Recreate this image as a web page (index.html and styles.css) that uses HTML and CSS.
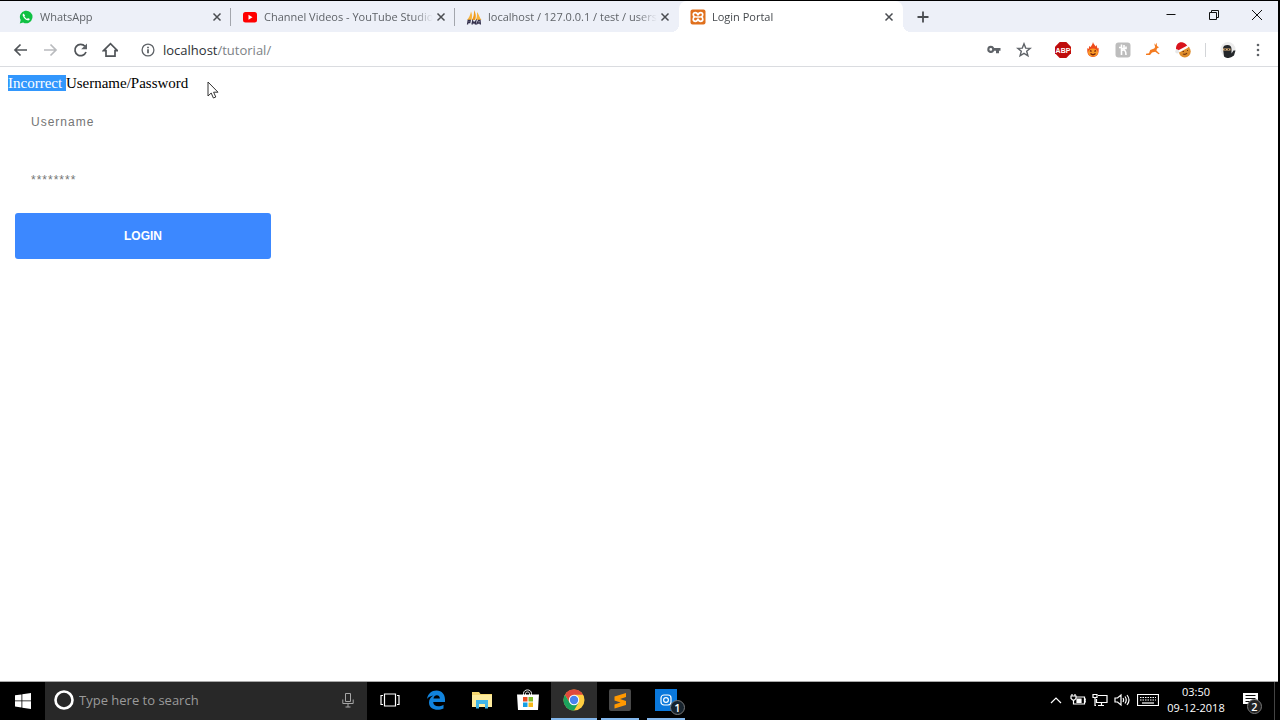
FILE: index.html
```html
<!DOCTYPE html>
<html lang="en">
<head>
<meta charset="utf-8">
<title>Login Portal</title>
<link rel="stylesheet" href="styles.css">
</head>
<body>
<div class="browser">
  <header class="strip">
    <div class="tabs">
      <div class="tab">
        <svg class="fav" viewBox="0 0 16 16"><path d="M1.800 14.400l.9-3.300a6.300 6.300 0 1 1 2.400 2.400z" fill="#10c143"/><path d="M5.600 4.400c-.9.4-1.200 1.400-.7 2.500.9 2 2.500 3.700 4.500 4.400 1.200.4 2.200-.2 2.400-1.300L9.900 9l-.8.9C7.900 9.400 6.900 8.400 6.400 7.200l.7-.8z" fill="#fff"/></svg>
        <span class="label">WhatsApp</span>
        <button class="close" aria-label="Close tab"><svg width="10" height="10" viewBox="0 0 10 10"><path d="M1.500 1.500l7 7m0-7l-7 7"/></svg></button>
      </div>
      <div class="tab">
        <svg class="fav" viewBox="0 0 16 16"><rect x="1" y="3" width="14" height="10.500" rx="2.500" fill="#f00"/><path d="M6.500 5.800v5l4-2.500z" fill="#fff"/></svg>
        <span class="label">Channel Videos - YouTube Studio</span>
        <button class="close" aria-label="Close tab"><svg width="10" height="10" viewBox="0 0 10 10"><path d="M1.500 1.500l7 7m0-7l-7 7"/></svg></button>
      </div>
      <div class="tab last">
        <svg class="fav" viewBox="0 0 16 16"><path d="M1 11C3 9 4.300 6 5 2.500c1.200 2.500 1.300 5.500.5 8.500z" fill="#f7b23b"/><path d="M6 11c1.500-3 2.300-6 2-10 2 3 2.300 7 1.200 10z" fill="#f29a1a"/><path d="M9.800 11c1-2 1.400-4 1.200-8 2 2.500 2.700 6 4.500 8z" fill="#f7b23b"/><path d="M1.500 15.500l.7-4h2l-.4 2h-1.700M6 15.500l.7-3.500 1.200 2.200 2-2.200-.7 3.500M10.500 15.500l2-4h1.500l.4 4m-3-1.500h3" fill="none" stroke="#34304c" stroke-width="1.300"/></svg>
        <span class="label">localhost / 127.0.0.1 / test / users</span>
        <button class="close" aria-label="Close tab"><svg width="10" height="10" viewBox="0 0 10 10"><path d="M1.500 1.500l7 7m0-7l-7 7"/></svg></button>
      </div>
      <div class="tab active">
        <svg class="fav" viewBox="0 0 16 16"><rect x=".5" y=".5" width="15" height="15" rx="2" fill="#e0701d"/><g fill="none" stroke="#fff" stroke-width="1.700"><path d="M8 6.300C7.500 4.500 6.700 3.700 5.300 3.700c-2.600 0-2.600 3.300-.6 4.100-2.200 1-2 4.500.6 4.500 1.400 0 2.200-.8 2.700-2.600M8 6.300c.5-1.800 1.300-2.600 2.700-2.600 2.600 0 2.600 3.300.6 4.100 2.200 1 2 4.500-.6 4.500-1.400 0-2.200-.8-2.700-2.600M5.500 8h5"/></g></svg>
        <span class="label">Login Portal</span>
        <button class="close" aria-label="Close tab"><svg width="10" height="10" viewBox="0 0 10 10"><path d="M1.500 1.500l7 7m0-7l-7 7"/></svg></button>
      </div>
      <button class="newtab" aria-label="New tab"><svg width="12" height="12" viewBox="0 0 12 12"><path d="M6 .5v11M.5 6h11" stroke="#4a4d51" stroke-width="1.800"/></svg></button>
    </div>
    <div class="winbtns">
      <button aria-label="Minimize"><svg width="12" height="12" viewBox="0 0 12 12"><path d="M1.500 5.500h9"/></svg></button>
      <button aria-label="Restore"><svg width="12" height="12" viewBox="0 0 12 12"><path d="M1.500 3.500h7v7h-7zM3.500 3.500v-2h7v7h-2"/></svg></button>
      <button aria-label="Close"><svg width="12" height="12" viewBox="0 0 12 12"><path d="M1 1l10 10M11 1L1 11"/></svg></button>
    </div>
  </header>
  <nav class="toolbar">
    <button class="tool" aria-label="Back"><svg viewBox="0 0 16 16"><path d="M15 8H3.500M8.500 2.500L3 8l5.500 5.500" class="ln"/></svg></button>
    <button class="tool dim" aria-label="Forward"><svg viewBox="0 0 16 16"><path d="M2 8h11.500M8.500 2.500L14 8l-5.500 5.500" class="ln"/></svg></button>
    <button class="tool" aria-label="Reload"><svg viewBox="0 0 16 16"><path d="M14 10a5.700 5.700 0 1 1-1-5.700" class="ln"/><path d="M15 1.500v5.800H9.200z"/></svg></button>
    <button class="tool" aria-label="Home"><svg viewBox="0 0 16 16"><path d="M1.500 8.600L8.500 1.700l7 6.900H13v5.600H4V8.600z" class="ln"/></svg></button>
    <div class="address">
      <svg width="14" height="14" viewBox="0 0 14 14"><circle cx="7" cy="7" r="5.900" fill="none" stroke="#5f6368" stroke-width="1.300"/><path d="M6.200 6.200h1.600v4H6.200zM6.200 3.700h1.600v1.500H6.200z" fill="#4d5256"/></svg>
      <span class="url">localhost<span class="path">/tutorial/</span></span>
    </div>
    <button class="tool" aria-label="Saved passwords"><svg viewBox="0 0 16 16"><path fill-rule="evenodd" d="M4.800 3.800a3.600 3.600 0 1 0 3.400 5H10v2.500h3V8.800h1.500V5.900H8.200a3.600 3.600 0 0 0-3.400-2.100zm0 2.200a1.400 1.400 0 1 1 0 2.800 1.400 1.400 0 0 1 0-2.800z"/></svg></button>
    <button class="tool" aria-label="Bookmark"><svg viewBox="0 0 16 16"><path d="M8 1.800l1.700 4.300 4.500.3-3.500 2.900 1.200 4.500L8 11.300l-3.900 2.500 1.200-4.500L1.800 6.400l4.500-.3z" fill="none" stroke="#5f6368" stroke-width="1.400"/></svg></button>
    <div class="extensions">
      <button class="tool" aria-label="Adblock Plus"><svg viewBox="0 0 16 16"><path d="M4.700 0h6.600L16 4.700v6.600L11.300 16H4.700L0 11.300V4.700z" fill="#bf0d0d"/><text x="8" y="10.500" text-anchor="middle" class="abp">ABP</text></svg></button>
      <button class="tool" aria-label="Hot extension"><svg viewBox="0 0 16 16"><path d="M8 0c.3 2 1.700 2.800 2.500 4.500l1-1.500c.5 1.500.5 2.200 1 3.500l1-.7c.8 5.800-1 9.200-5.500 9.200S1.700 11.500 2.400 6l1.300 1 .5-3 1.500 1C6.700 3.500 7.500 2 8 0z" fill="#ee4b1b"/><ellipse cx="8" cy="10.500" rx="5" ry="4" fill="#fa9a27"/><path d="M5 8.600l1.600.8M11 8.600l-1.600.8M5.500 11.500q2.500 2.500 5 0" stroke="#78230d" stroke-width="1.300" fill="none"/></svg></button>
      <button class="tool" aria-label="Honey"><svg viewBox="0 0 16 16"><rect x=".5" y=".5" width="15" height="15" rx="3" fill="#bdbdbd"/><path d="M6.500 2.500V8M4 5.500h3M6.500 8v5M6.500 8.500c3-1.500 4.500 0 4.500 4.500M9 3v5M11 4.500v2H7" stroke="#fff" stroke-width="1.600" fill="none"/></svg></button>
      <button class="tool" aria-label="Deer extension"><svg viewBox="0 0 16 16"><path d="M9 1l1.300 2L11.500.8l.5 3.200 2 1.200-2 1.300-.6 2 3.300 3.300-1 .5-3.500-2.500L7 10.500 5 13H1v-1.300l3-.5 1.200-3.200 4-1.500 1-1.500z" fill="#f47b20"/></svg></button>
      <button class="tool" aria-label="Cookie extension"><svg viewBox="0 0 16 16"><circle cx="9.800" cy="9.500" r="5.900" fill="#de8d2b"/><path d="M1 7C1 2 4-.5 8 .5c2.500.6 4 2.500 4.500 4.500L4.500 9z" fill="#d9131c"/><path d="M4.500 9L12 5" stroke="#fff" stroke-width="2.200" stroke-linecap="round"/><circle cx="2.200" cy="9.500" r="2" fill="#e8e8e8"/><path d="M7.500 9.500H9m3-1h1M8 12q2.500 1 4-.8" stroke="#773811" stroke-width="1.200" fill="none"/></svg></button>
    </div>
    <span class="divider"></span>
    <button class="tool" aria-label="Profile"><svg viewBox="0 0 16 16"><circle cx="8" cy="7.500" r="7.500" fill="#ececec"/><path d="M3 6.500C3 4 5 3 7.500 3 10 3 11.500 4.500 11.500 7v4.500l2-3h2l-1.500 5q-6 4.500-10 1z" fill="#24272a"/><path d="M3 6.500h7.500v2H3z" fill="#e6b679"/><path d="M4.500 7.500h1.300m2 0h1.300" stroke="#222"/></svg></button>
    <button class="tool" aria-label="Menu"><svg viewBox="0 0 16 16"><circle cx="8" cy="3" r="1.300"/><circle cx="8" cy="8" r="1.300"/><circle cx="8" cy="13" r="1.300"/></svg></button>
  </nav>
  <main class="page">
    <p class="error"><mark>Incorrect </mark>Username/Password</p>
    <form class="login">
      <input type="text" aria-label="Username" placeholder="Username">
      <input type="password" aria-label="Password" placeholder="********">
      <button type="button">LOGIN</button>
    </form>
    <svg class="cursor" width="12" height="18" viewBox="0 0 12 18"><path d="M1 1v14l3.200-3 2.200 5 2.400-1-2.200-4.800H11z" fill="#fff" stroke="#333"/></svg>
  </main>
</div>
<footer class="taskbar">
  <button class="start" aria-label="Start"><svg width="16" height="16" viewBox="0 0 16 16" fill="#fff"><path d="M0 2.300l6.500-.9v6.100H0zM7.300 1.300L16 0v7.500H7.300zM0 8.300h6.500v6.200L0 13.600zM7.300 8.300H16V16l-8.700-1.300z"/></svg></button>
  <div class="search">
    <svg width="22" height="22" viewBox="0 0 22 22"><circle cx="11" cy="11" r="8.500" fill="none" stroke="#fff" stroke-width="2.600"/></svg>
    <input type="text" aria-label="Search" placeholder="Type here to search">
    <svg width="12" height="16" viewBox="0 0 12 16" fill="none" stroke="#a5a5a5"><path d="M3.500 1.500h5v8h-5zM.8 7.500v4h10.400v-4M6 11.500V15M3.500 15h5"/></svg>
  </div>
  <div class="apps">
    <button class="app" aria-label="Task View"><svg width="20" height="14" viewBox="0 0 20 14" fill="none" stroke="#fff" stroke-width="1.200"><path d="M4.500 1h11v12h-11zM3 2.500H1v9h2M17 2.500h2v9h-2"/></svg></button>
    <button class="app" aria-label="Edge"><svg width="20" height="20" viewBox="0 0 20 20"><path d="M1 9C2 3.500 5.500.5 10.500.5c5.500 0 8.500 4 8.500 9V12H7.200c.2 5 6.300 5.300 10.300 2.700v3.700C11.500 21.500 3 19.500 3 12.500c0-3 1.700-5.600 4.500-7C4.500 5.800 2.200 7.200 1 9zm6.400-.5h6.500c0-4.500-5.900-4.500-6.500 0z" fill="#1183dc" fill-rule="evenodd"/></svg></button>
    <button class="app" aria-label="File Explorer"><svg width="20" height="18" viewBox="0 0 20 18"><path d="M0 1h7l1.500 2H20v13H0z" fill="#f5d66e"/><path d="M0 4h20v12H0z" fill="#fdeb9d"/><path d="M4 9h12v8.500h-3V13H7v4.500H4z" fill="#3fb5e8"/></svg></button>
    <button class="app" aria-label="Store"><svg width="22" height="22" viewBox="0 0 22 22"><path d="M6.500 7V4.500C6.500-.3 14.500-.3 14.500 4.500V7M8.500 6V4.500c0-2 4-2 4 0V6" fill="none" stroke="#eee"/><path d="M0 5.500h22L21 21H1z" fill="#fff"/><path d="M6 8h4.500v4.500H6z" fill="#e84b22"/><path d="M11.500 8H16v4.500h-4.500z" fill="#7fb92a"/><path d="M6 13.500h4.500V18H6z" fill="#159ee4"/><path d="M11.500 13.500H16V18h-4.500z" fill="#f6b81a"/></svg></button>
    <button class="app current" aria-label="Chrome"><svg width="22" height="22" viewBox="0 0 22 22"><circle cx="11" cy="11" r="10.500" fill="#ffcd40"/><path d="M1.900 5.750A10.500 10.500 0 0 1 20.100 5.750H11L6.500 13.600z" fill="#e04a3d"/><path d="M1.900 5.750A10.500 10.500 0 0 0 11 21.500l4.600-7.900H6.500z" fill="#1ba25d"/><circle cx="11" cy="11" r="5.200" fill="#fff"/><circle cx="11" cy="11" r="4.200" fill="#4a83ee"/></svg></button>
    <button class="app open" aria-label="Sublime Text"><svg width="22" height="22" viewBox="0 0 22 22"><rect width="22" height="22" rx="2" fill="#494949"/><path d="M5.500 7.500L17 4v4l-6 2 6 2v4L5.500 19.500v-4l6-2-6-2z" fill="#ff9800"/></svg></button>
    <button class="app open" aria-label="Instagram"><svg width="22" height="22" viewBox="0 0 22 22"><path d="M0 0h22v22H0z" fill="#0a78dc"/><g fill="none" stroke="#fff" stroke-width="1.200"><rect x="6" y="6" width="10" height="10" rx="3"/><circle cx="11" cy="11" r="2.400"/></g></svg><span class="badge">1</span></button>
  </div>
  <div class="tray">
    <button aria-label="Show hidden icons"><svg width="12" height="8" viewBox="0 0 12 8"><path d="M1 7l5-5 5 5"/></svg></button>
    <button aria-label="Battery"><svg width="16" height="14" viewBox="0 0 16 14"><path d="M6.500 4h8v7h-9M14.500 6H16v3h-1.500M1 3h5v2.500L4.500 7h-2L1 5.500zM2 1v2m3-2v2M3.500 7v4h2"/><path d="M7 6h4v3.500H7z" fill="#fff"/></svg></button>
    <button aria-label="Network"><svg width="16" height="14" viewBox="0 0 16 14"><path d="M6 2.500h9v7H4.500V6M6 12.500h6M9.500 9.500v3M1 1.500h4v3H1zM3 4.500v8h1"/></svg></button>
    <button aria-label="Volume"><svg width="16" height="14" viewBox="0 0 16 14"><path d="M1 5h2.500L7 2v10L3.500 9H1zM9 5q1.200 2 0 4M11 3.500q2.500 3.500 0 7M13 2q4 5 0 10"/></svg></button>
    <button class="wide" aria-label="Keyboard"><svg width="22" height="12" viewBox="0 0 22 12"><path d="M.5.500h21v11H.5z"/><path d="M3 3.500h16M3 6h16" stroke-dasharray="1.500 1"/><path d="M5 9h12"/></svg></button>
    <div class="clock"><time>03:50</time><span>09-12-2018</span></div>
    <button class="notes" aria-label="Notifications"><svg width="16" height="16" viewBox="0 0 16 16"><path d="M0 1h15v11H8l-3 3v-3H0z" fill="#fff" stroke="none"/><path d="M2.500 3.500h10M2.500 6.500h10M2.500 9.500h6" stroke="#111"/></svg><span class="badge">2</span></button>
    <span class="peek"></span>
  </div>
</footer>
</body>
</html>
```
FILE: styles.css
```css
* { box-sizing: border-box; }
body {
  margin: 0;
  min-height: 100vh;
  display: flex;
  flex-direction: column;
  background: #000;
  font-family: "Open Sans", "Noto Sans", sans-serif;
}
button { border: 0; padding: 0; background: none; font: inherit; color: inherit; }
input { border: 0; padding: 0; background: none; outline: 0; }
svg { display: block; flex: none; }

.browser {
  flex: 1;
  display: flex;
  flex-direction: column;
  margin: 1px 2px 0 0;
  background: #fff;
  border-bottom: 1px solid #a9a9a9;
}
.strip { display: flex; height: 31px; background: #edf0f8; }
.tabs { flex: 1; display: flex; min-width: 0; padding-left: 7px; }
.tab {
  flex: 0 1 224px;
  min-width: 0;
  display: flex;
  align-items: center;
  padding: 0 6px 0 11px;
  font-size: 11px;
  color: #5f6368;
  background: linear-gradient(#a3a6ad, #a3a6ad) right center / 1px 18px no-repeat;
}
.tab.last { background: none; }
.tab.active {
  position: relative;
  color: #45494d;
  background: #fff;
  border-radius: 8px 8px 0 0;
}
.tab.active::before, .tab.active::after {
  content: "";
  position: absolute;
  bottom: 0;
  width: 8px;
  height: 8px;
}
.tab.active::before { left: -8px; background: radial-gradient(circle at 0 0, #edf0f8 8px, #fff 8px); }
.tab.active::after { right: -8px; background: radial-gradient(circle at 100% 0, #edf0f8 8px, #fff 8px); }
.fav { width: 16px; height: 16px; }
.label {
  flex: 1;
  margin-left: 6px;
  overflow: hidden;
  white-space: nowrap;
  -webkit-mask-image: linear-gradient(to left, transparent, #000 20px);
  mask-image: linear-gradient(to left, transparent, #000 20px);
}
.close { width: 16px; height: 16px; display: grid; place-items: center; }
.close svg { fill: none; stroke: #4a4d51; stroke-width: 1.5; }
.newtab { width: 40px; display: grid; place-items: center; }
.winbtns { display: flex; }
.winbtns button { width: 43px; height: 27px; display: grid; place-items: center; }
.winbtns svg { fill: none; stroke: #111; }

.toolbar {
  display: flex;
  align-items: center;
  height: 35px;
  padding: 1px 5px 0;
  border-bottom: 1px solid #dadce0;
}
.tool { width: 30px; height: 30px; display: grid; place-items: center; }
.tool svg { width: 16px; height: 16px; fill: #5f6368; }
.tool .ln { fill: none; stroke: #505458; stroke-width: 1.7; }
.tool.dim .ln { stroke: #b9bbbe; }
.address { flex: 1; display: flex; align-items: center; gap: 8px; padding-left: 16px; }
.url { font-size: 13px; color: #2d3135; }
.path { color: #7d8286; }
.extensions { display: flex; margin-left: 9px; }
.abp { font: bold 7px "Liberation Sans", sans-serif; fill: #fff; }
.divider { width: 1px; height: 14px; margin: 0 7px; background: #d3d5d8; }

.page { position: relative; flex: 1; padding: 8px; }
.error { margin: 0; font: 15px/17px "Liberation Serif", serif; color: #000; }
.error mark { background: #3297fd; color: #fff; }
.login {
  display: flex;
  flex-direction: column;
  gap: 8px;
  width: 256px;
  margin: 5px 7px;
}
.login input {
  height: 50px;
  padding: 0 16px;
  font: 12px "Liberation Sans", sans-serif;
  letter-spacing: 1px;
}
.login input::placeholder { color: #757575; }
.login button {
  height: 46px;
  border-radius: 3px;
  background: #3c88ff;
  color: #fff;
  font: bold 12px "Liberation Sans", sans-serif;
}
.cursor { position: absolute; left: 207px; top: 14px; }

.taskbar { display: flex; height: 38px; background: #000; color: #fff; }
.start { width: 45px; display: grid; place-items: center; }
.search {
  flex: 0 1 322px;
  display: flex;
  align-items: center;
  gap: 4px;
  padding: 0 13px 2px 8px;
  background: #282828;
}
.search input { flex: 1; min-width: 0; font: 13px "Open Sans", sans-serif; color: #fff; }
.search input::placeholder { color: #9a9a9a; }
.apps { display: flex; flex: 1; }
.app { position: relative; width: 46px; padding-bottom: 2px; display: grid; place-items: center; }
.app.current { background: linear-gradient(#83b7ec, #83b7ec) center bottom / 100% 2px no-repeat #2d2d2d; }
.app.open { background: linear-gradient(#83b7ec, #83b7ec) center bottom / 38px 2px no-repeat; }
.badge {
  position: absolute;
  width: 15px;
  height: 15px;
  border: 1px solid #777;
  border-radius: 50%;
  background: #17232d;
  font-size: 11px;
  font-weight: 600;
  line-height: 13px;
  text-align: center;
}
.app .badge { right: 4px; bottom: 5px; }
.tray { display: flex; align-items: stretch; }
.tray button { width: 22px; padding-bottom: 2px; display: grid; place-items: center; }
.tray svg { fill: none; stroke: #fff; stroke-width: 1.2; }
.tray .wide { width: 30px; }
.clock {
  width: 66px;
  padding-bottom: 2px;
  display: flex;
  flex-direction: column;
  align-items: center;
  justify-content: center;
  font-size: 11px;
  line-height: 16px;
}
.tray .notes { position: relative; width: 44px; }
.notes .badge { right: 11px; bottom: 6px; background: #222; }
.peek { width: 1px; margin: 0 5px 0 1px; background: #444; }
```
